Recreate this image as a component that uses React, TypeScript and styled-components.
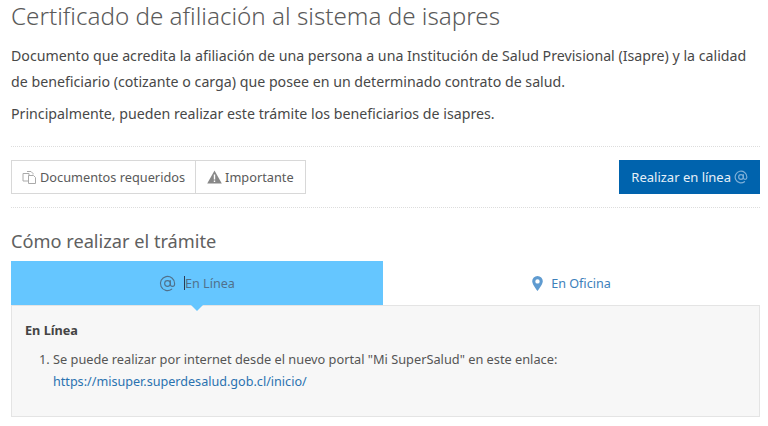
import React from "react";
import styled, { createGlobalStyle } from "styled-components";
import { AtSign } from "lucide-react";

const GlobalStyle = createGlobalStyle`
  html, body {
    margin: 0;
    padding: 0;
    background: #fff;
  }
  body {
    font-family: "Noto Sans", "Open Sans", sans-serif;
    color: #4a4a4a;
  }
`;

const Page = styled.div`
  width: 749px;
  padding: 0 8px 0 11px;
`;

const Title = styled.h1`
  margin: 0;
  font-size: 24.2px;
  line-height: 32px;
  font-weight: 300;
  color: #5a5a5a;
`;

const Text = styled.p`
  margin: 6px 0 0;
  font-size: 14.2px;
  line-height: 26px;
  color: #484848;

  ${Title} + & {
    margin-top: 11px;
  }
`;

const Toolbar = styled.div`
  display: flex;
  justify-content: space-between;
  align-items: stretch;
  margin-top: 19px;
  padding: 13px 0;
  border-top: 1px dotted #ddd;
  border-bottom: 1px dotted #ddd;
`;

const TabGroup = styled.div`
  display: flex;
  border: 1px solid #d8d8d8;
`;

const ToolButton = styled.div`
  display: flex;
  align-items: center;
  gap: 3px;
  height: 32px;
  padding: 0 10px;
  font-size: 12.75px;
  color: #5a5a5a;

  & + & {
    border-left: 1px solid #d8d8d8;
    padding: 0 11px;
  }
`;

const PrimaryButton = styled.div`
  display: flex;
  align-items: center;
  gap: 3px;
  height: 34px;
  padding: 0 12px;
  font-size: 13px;
  color: #e6f0f8;
  background: #0063ad;
`;

const Subtitle = styled.h2`
  margin: 21px 0 0;
  font-size: 18.2px;
  line-height: 24px;
  font-weight: 400;
  color: #606060;
`;

const Tabs = styled.div`
  display: flex;
  margin-top: 8px;
`;

const Tab = styled.div<{ $active?: boolean }>`
  position: relative;
  flex: ${(p) => (p.$active ? "0 0 372px" : "1")};
  display: flex;
  justify-content: center;
  align-items: center;
  gap: 8px;
  height: 44px;
  font-size: 12.6px;
  color: ${(p) => (p.$active ? "#50718c" : "#3d80ba")};
  background: ${(p) => (p.$active ? "#65c6ff" : "#fff")};
  ${(p) =>
    p.$active &&
    `&::after {
      content: "";
      position: absolute;
      left: 50%;
      bottom: -6px;
      margin-left: -6px;
      border-left: 6px solid transparent;
      border-right: 6px solid transparent;
      border-top: 6px solid #65c6ff;
    }`}
`;

const Caret = styled.span`
  display: inline-block;
  width: 1px;
  height: 14px;
  margin-right: -8px;
  background: #2b3a55;
`;

const Panel = styled.div`
  height: 110px;
  padding: 0 13px;
  background: #f7f7f7;
  border: 1px solid #e4e4e4;
`;

const PanelTitle = styled.div`
  margin-top: 14px;
  font-size: 12.7px;
  line-height: 20px;
  font-weight: 700;
  color: #444;
`;

const Steps = styled.ol`
  margin: 8px 0 0;
  padding: 0 0 0 28px;
  font-size: 12.78px;
  line-height: 22px;
  color: #555;
`;

const Link = styled.a`
  font-size: 12.6px;
  color: #2a72b0;
  text-decoration: none;
`;

const DocsIcon = () => (
  <svg width="15" height="15" viewBox="0 0 15 15" fill="none" stroke="#aaa" strokeWidth="1">
    <path d="M1 3.5h6v7.5H1z" />
    <path d="M5 1.5h4l2 2v1" />
    <path d="M6.5 5.5h5l2 2v6h-7z" fill="#fff" />
  </svg>
);

const WarningIcon = () => (
  <svg width="15" height="14" viewBox="0 0 15 14">
    <path d="M7.5 0.5 14.8 13.5H0.2z" fill="#888" />
    <path d="M6.8 4.5h1.4v5H6.8zM6.8 10.5h1.4v1.5H6.8z" fill="#fff" />
  </svg>
);

const PinIcon = () => (
  <svg width="11" height="15" viewBox="0 0 11 15">
    <path
      fillRule="evenodd"
      d="M5.5 0A5.3 5.3 0 0 0 .2 5.3C.2 8.6 5.5 15 5.5 15s5.3-6.4 5.3-9.7A5.3 5.3 0 0 0 5.5 0zm0 3.2a2.2 2.2 0 1 1 0 4.4 2.2 2.2 0 0 1 0-4.4z"
      fill="#5f9bd0"
    />
  </svg>
);

export default function App() {
  return (
    <Page>
      <GlobalStyle />
      <Title>Certificado de afiliación al sistema de isapres</Title>
      <Text>
        Documento que acredita la afiliación de una persona a una Institución de Salud Previsional (Isapre) y la calidad
        <br />
        de beneficiario (cotizante o carga) que posee en un determinado contrato de salud.
      </Text>
      <Text>Principalmente, pueden realizar este trámite los beneficiarios de isapres.</Text>
      <Toolbar>
        <TabGroup>
          <ToolButton>
            <DocsIcon />
            Documentos requeridos
          </ToolButton>
          <ToolButton>
            <WarningIcon />
            Importante
          </ToolButton>
        </TabGroup>
        <PrimaryButton>
          Realizar en línea
          <AtSign size={14} color="#7fb0d8" />
        </PrimaryButton>
      </Toolbar>
      <Subtitle>Cómo realizar el trámite</Subtitle>
      <Tabs>
        <Tab $active>
          <AtSign size={17} color="#50718c" strokeWidth={1.6} />
          <Caret />
          En Línea
        </Tab>
        <Tab>
          <PinIcon />
          En Oficina
        </Tab>
      </Tabs>
      <Panel>
        <PanelTitle>En Línea</PanelTitle>
        <Steps>
          <li>
            Se puede realizar por internet desde el nuevo portal "Mi SuperSalud" en este enlace:
            <br />
            <Link href="#">https://misuper.superdesalud.gob.cl/inicio/</Link>
          </li>
        </Steps>
      </Panel>
    </Page>
  );
}
